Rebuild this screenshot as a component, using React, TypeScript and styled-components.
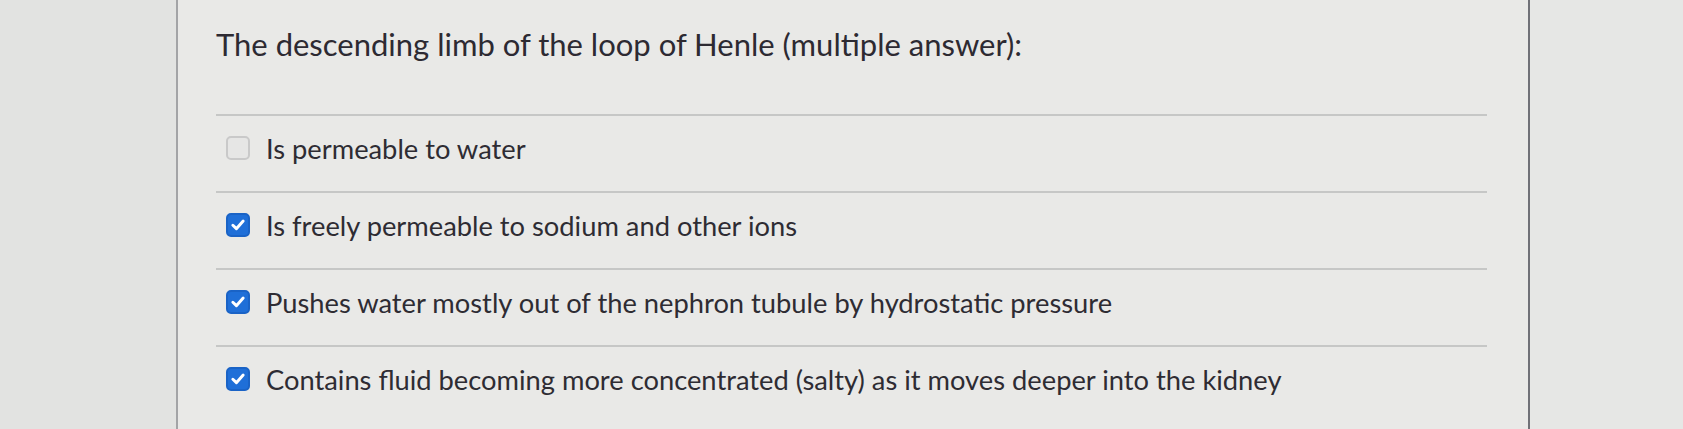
import React from "react";
import styled, { createGlobalStyle } from "styled-components";

const Global = createGlobalStyle`
  html, body { margin: 0; padding: 0; }
  body {
    background: #e3e4e2;
    font-family: Lato, "Open Sans", sans-serif;
    width: 1683px;
    height: 429px;
    overflow: hidden;
  }
`;

const Page = styled.div`
  display: flex;
  height: 429px;
`;

const Gutter = styled.div<{ $w: number; $line: string }>`
  width: ${(p) => p.$w}px;
  flex: none;
  border-right: 2px solid ${(p) => p.$line};
  background: #e2e3e1;
`;

const Panel = styled.div`
  width: 1352px;
  flex: none;
  border-right: 2px solid #707177;
  background: #e9e9e7;
  padding: 0 41px 0 38px;
  box-sizing: border-box;
`;

const Right = styled.div`
  flex: 1;
  background: #e6e7e5;
`;

const Title = styled.h1`
  margin: 0;
  height: 114px;
  padding-top: 25px;
  box-sizing: border-box;
  font-size: 31px;
  font-weight: 400;
  color: #2d2a32;
`;

const List = styled.ul`
  list-style: none;
  margin: 0;
  padding: 0;
`;

const Item = styled.li`
  display: flex;
  align-items: center;
  gap: 16px;
  height: 77px;
  padding: 0 0 11px 10px;
  box-sizing: border-box;
  border-top: 2px solid #c6c7c6;
  font-size: 27.3px;
  color: #2e2c33;
`;

const Box = styled.span<{ $checked: boolean }>`
  width: 24px;
  height: 24px;
  flex: none;
  border-radius: 5px;
  box-sizing: border-box;
  display: flex;
  align-items: center;
  justify-content: center;
  background: ${(p) => (p.$checked ? "#1f6fd8" : "#e6e6e5")};
  border: 2px solid ${(p) => (p.$checked ? "#1a63c6" : "#c9c9c9")};
`;

const options = [
  { text: "Is permeable to water", checked: false },
  { text: "Is freely permeable to sodium and other ions", checked: true },
  { text: "Pushes water mostly out of the nephron tubule by hydrostatic pressure", checked: true },
  { text: "Contains fluid becoming more concentrated (salty) as it moves deeper into the kidney", checked: true },
];

export default function App() {
  return (
    <>
      <Global />
      <Page>
        <Gutter $w={176} $line="#a3a4a6" />
        <Panel>
          <Title>The descending limb of the loop of Henle (multiple answer):</Title>
          <List>
            {options.map((o) => (
              <Item key={o.text}>
                <Box $checked={o.checked}>
                  {o.checked && (
                    <svg width="16" height="16" viewBox="0 0 14 14">
                      <path d="M2.5 7.2 L5.6 10.2 L11.5 3.6" fill="none" stroke="#fff" strokeWidth="2.6" strokeLinecap="round" strokeLinejoin="round" />
                    </svg>
                  )}
                </Box>
                <span>{o.text}</span>
              </Item>
            ))}
          </List>
        </Panel>
        <Right />
      </Page>
    </>
  );
}
